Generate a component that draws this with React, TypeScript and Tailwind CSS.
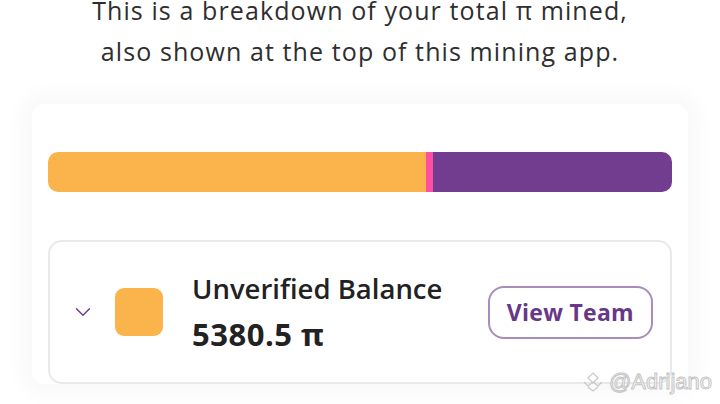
import { ChevronDown } from 'lucide-react';

export default function App() {
  return (
    <div
      className="relative h-[404px] w-[720px] overflow-hidden bg-white"
      style={{ fontFamily: '"Open Sans", "Noto Sans", sans-serif' }}
    >
      <div className="-mt-[10px] text-center text-[25px] leading-[41px] tracking-[1.1px] text-[#2e2e2e]">
        <p>This is a breakdown of your total π mined,</p>
        <p>also shown at the top of this mining app.</p>
      </div>

      <div className="mx-[32px] mt-[32px] rounded-[12px] bg-white px-[16px] pt-[48px] shadow-[0_0_24px_8px_rgba(0,0,0,0.035)]">
        <div className="flex h-[40px] overflow-hidden rounded-[10px]">
          <div className="w-[378px] bg-[#fbb44b]" />
          <div className="w-[7px] bg-[#ff4fa3]" />
          <div className="flex-1 bg-[#733d8f]" />
        </div>

        <div className="mt-[48px] flex h-[144px] items-center rounded-[14px] border-2 border-[#e9e9e9] pl-[20px] pr-[17px]">
          <ChevronDown className="h-[26px] w-[26px] text-[#6b3a8a]" strokeWidth={1.3} />
          <div className="ml-[19px] h-[48px] w-[48px] rounded-[9px] bg-[#fbb44b]" />
          <div className="ml-[29px] flex flex-1 flex-col">
            <span className="text-[27.5px] font-semibold leading-[36px] text-[#222]">
              Unverified Balance
            </span>
            <span className="mt-[8px] text-[31px] font-bold leading-[38px] tracking-[0.5px] text-[#222]">
              5380.5 π
            </span>
          </div>
          <button className="rounded-[16px] border-2 border-[#a98cba] px-[17px] py-[9px] text-[23px] font-bold leading-[31px] tracking-[0.3px] text-[#673887]">
            View Team
          </button>
        </div>
      </div>

      {/* watermark */}
      <div className="absolute right-[8px] top-[368px] flex items-center gap-[4px]">
        <svg width="24" height="24" viewBox="0 0 24 24" fill="none" stroke="#c8c8c8" strokeWidth="1.2">
          <path d="M12 3 L17 8 L12 13 L7 8 Z" />
          <path d="M3 12 L7 16 L12 12 L17 16 L21 12" />
          <path d="M7 17 L12 21 L17 17" />
        </svg>
        <span
          className="text-[22px] leading-[28px] text-white [-webkit-text-stroke:1px_#c4c4c4]"
          style={{ fontFamily: '"Liberation Sans", sans-serif' }}
        >
          @Adrijano
        </span>
      </div>
    </div>
  );
}
